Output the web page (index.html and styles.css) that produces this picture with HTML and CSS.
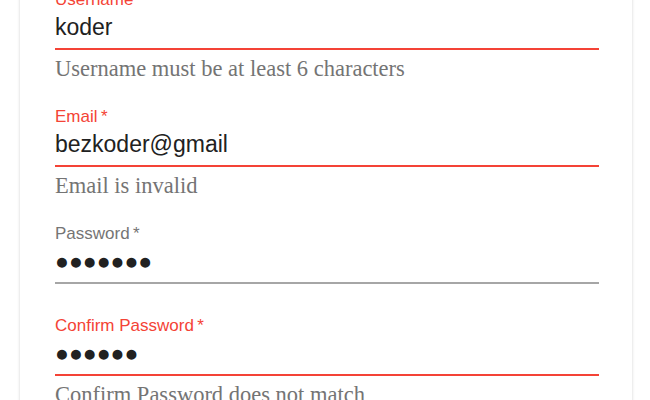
FILE: index.html
```html
<!DOCTYPE html>
<html lang="en">
<head>
<meta charset="utf-8">
<title>Register</title>
<link rel="stylesheet" href="styles.css">
</head>
<body>
<div class="card">
  <form class="form">
    <div class="field field--help">
      <label class="label label--error" for="username">Username<span class="req">&thinsp;*</span></label>
      <input class="input input--error" id="username" type="text" value="koder">
      <div class="helper">Username must be at least 6 characters</div>
    </div>
    <div class="field field--help">
      <label class="label label--error" for="email">Email<span class="req">&thinsp;*</span></label>
      <input class="input input--error" id="email" type="text" value="bezkoder@gmail">
      <div class="helper">Email is invalid</div>
    </div>
    <div class="field">
      <label class="label" for="password">Password<span class="req">&thinsp;*</span></label>
      <input class="input" id="password" type="text" value="●●●●●●●" aria-label="Password">
    </div>
    <div class="field field--help">
      <label class="label label--error" for="confirm">Confirm Password<span class="req">&thinsp;*</span></label>
      <input class="input input--error" id="confirm" type="text" value="●●●●●●" aria-label="Confirm Password">
      <div class="helper">Confirm Password does not match</div>
    </div>
  </form>
</div>
</body>
</html>
```
FILE: styles.css
```css
html, body {
  margin: 0;
  padding: 0;
  background: #ffffff;
  overflow: hidden;
}

.card {
  margin: -40px 18px 0 20px;
  padding: 30px 33px 40px 35px;
  background: #ffffff;
  box-shadow: 0 0 3px rgba(0, 0, 0, 0.18);
}

.form {
  display: flex;
  flex-direction: column;
}

.field {
  display: flex;
  flex-direction: column;
  margin-bottom: 32px;
}

.field--help {
  margin-bottom: 26px;
}

.label {
  font-family: "Liberation Sans", Arial, sans-serif;
  font-size: 17px;
  line-height: 20px;
  color: #757575;
  margin-bottom: 2px;
}

.label--error {
  color: #f44336;
}

.input {
  display: block;
  width: 100%;
  box-sizing: content-box;
  height: 30px;
  line-height: 30px;
  margin: 0;
  padding: 0 0 6px 0;
  border: none;
  border-bottom: 2px solid #a6a6a6;
  outline: none;
  background: transparent;
  font-family: "Liberation Sans", Arial, sans-serif;
  font-size: 23px;
  color: #212121;
}

.input--error {
  border-bottom-color: #f44336;
}

.helper {
  margin-top: 7px;
  font-family: "Liberation Serif", "Times New Roman", serif;
  font-size: 22.5px;
  line-height: 24px;
  color: #747474;
}
```
